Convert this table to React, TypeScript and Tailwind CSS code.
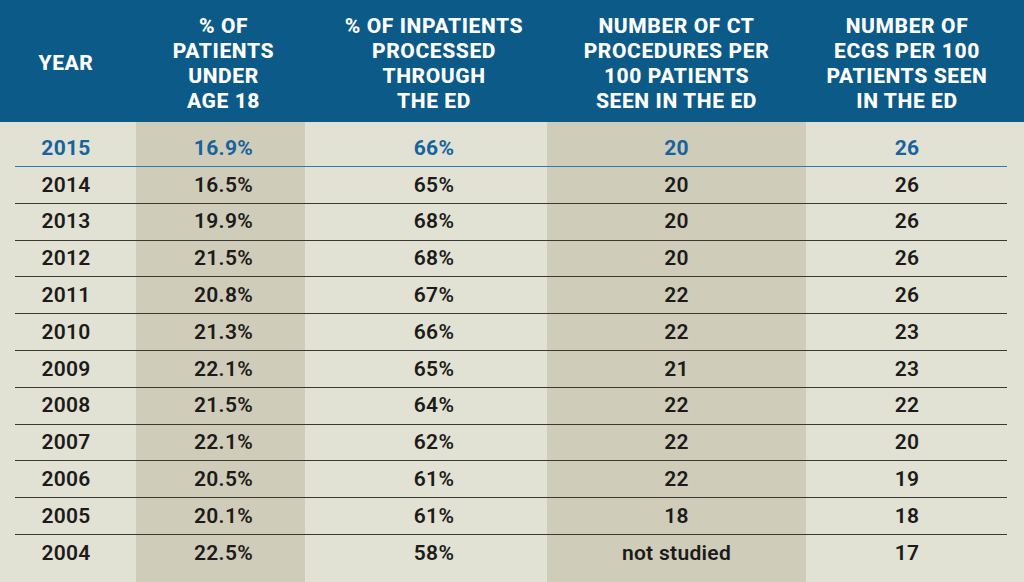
import React from "react";

const rows: [string, string, string, string, string][] = [
  ["2015", "16.9%", "66%", "20", "26"],
  ["2014", "16.5%", "65%", "20", "26"],
  ["2013", "19.9%", "68%", "20", "26"],
  ["2012", "21.5%", "68%", "20", "26"],
  ["2011", "20.8%", "67%", "22", "26"],
  ["2010", "21.3%", "66%", "22", "23"],
  ["2009", "22.1%", "65%", "21", "23"],
  ["2008", "21.5%", "64%", "22", "22"],
  ["2007", "22.1%", "62%", "22", "20"],
  ["2006", "20.5%", "61%", "22", "19"],
  ["2005", "20.1%", "61%", "18", "18"],
  ["2004", "22.5%", "58%", "not studied", "17"],
];

const colW = [
  "w-[136px] pr-[4px]",
  "w-[169px] pl-[6px]",
  "w-[242px] pl-[16px]",
  "w-[259px]",
  "flex-1 pr-[16px]",
];
const colBg = ["bg-[#e1e2d4]", "bg-[#cfcdb9]", "bg-[#e1e2d4]", "bg-[#cfcdb9]", "bg-[#e1e2d4]"];

const headers: string[][] = [
  ["YEAR"],
  ["% OF", "PATIENTS", "UNDER", "AGE 18"],
  ["% OF INPATIENTS", "PROCESSED", "THROUGH", "THE ED"],
  ["NUMBER OF CT", "PROCEDURES PER", "100 PATIENTS", "SEEN IN THE ED"],
  ["NUMBER OF", "ECGS PER 100", "PATIENTS SEEN", "IN THE ED"],
];

export default function App() {
  return (
    <div
      className="w-[1024px] h-[582px] overflow-hidden flex flex-col"
      style={{ fontFamily: "Roboto, 'Liberation Sans', sans-serif" }}
    >
      <div className="h-[122px] pt-[5px] bg-[#0c5a88] flex text-white font-extrabold text-[21px] leading-[25px] tracking-[0.6px]">
        {headers.map((h, i) => (
          <div key={i} className={`${colW[i]} flex flex-col items-center justify-center text-center`}>
            {h.map((l, j) => (
              <div key={j}>{l}</div>
            ))}
          </div>
        ))}
      </div>
      <div className="flex-1 flex flex-col">
        {rows.map((r, ri) => {
          const first = ri === 0;
          const last = ri === rows.length - 1;
          const h = first ? "h-[45px] pt-[8px]" : last ? "h-[47px] pb-[10px]" : "h-[36.8px]";
          const line = last
            ? ""
            : first
            ? "after:absolute after:left-[15px] after:right-[17px] after:bottom-[-1px] after:h-[2px] after:bg-[#2f7ab2]"
            : "after:absolute after:left-[15px] after:right-[17px] after:bottom-[-1px] after:h-[2px] after:bg-[#3a3934]";
          return (
            <div key={ri} className={`relative flex ${line}`}>
              {r.map((c, ci) => (
                <div
                  key={ci}
                  className={`${colW[ci]} ${colBg[ci]} ${h} flex items-center justify-center text-[21px] tracking-[0.3px] ${
                    first ? "text-[#17639e] font-bold" : "text-[#1d1b19] font-semibold"
                  }`}
                >
                  {c}
                </div>
              ))}
            </div>
          );
        })}
      </div>
    </div>
  );
}
